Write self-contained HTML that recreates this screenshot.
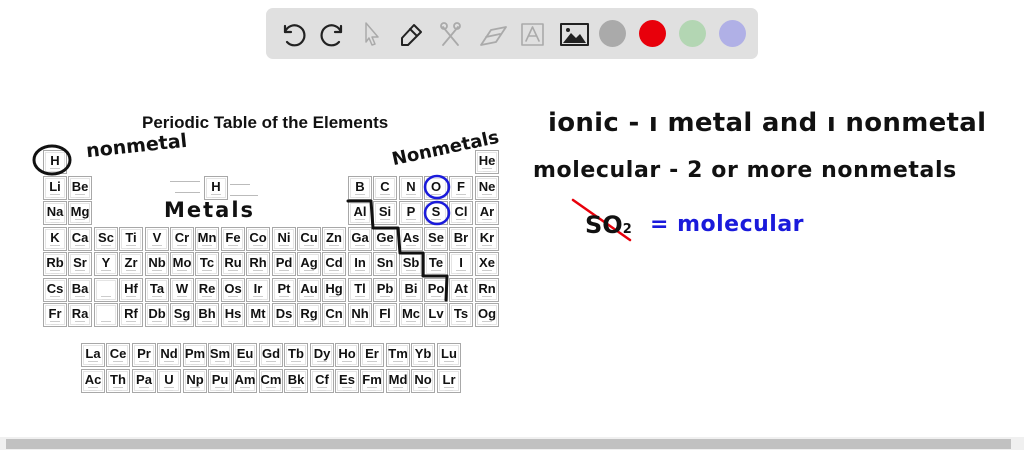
<!DOCTYPE html>
<html><head><meta charset="utf-8">
<style>
*{margin:0;padding:0;box-sizing:border-box}
body{width:1024px;height:450px;background:#fff;position:relative;overflow:hidden;font-family:"Liberation Sans",sans-serif}
#tb{position:absolute;left:266px;top:8px;width:492px;height:51px;background:#e0e0e0;border-radius:7px}
.c{position:absolute;top:12px;width:27px;height:27px;border-radius:50%}
.cell{position:absolute;width:24px;height:24px;border:1px solid #a8a8a8;background:#fff}
.cell i{position:absolute;left:1px;top:1px;right:1px;bottom:1px;border:1px solid #e4e4e4}
.cell b{position:absolute;left:0;right:0;top:2px;text-align:center;font-size:13px;font-weight:bold;color:#111}
.cell s{position:absolute;left:6px;right:6px;top:17px;height:1px;background:#ccc}
.cell u{position:absolute;left:7px;right:7px;top:20px;height:1px;background:#ddd}
.hw{position:absolute;font-family:"DejaVu Sans",sans-serif;color:#111;white-space:nowrap}
</style></head><body>
<div id="tb">
<svg width="492" height="51" style="position:absolute;left:0;top:0" fill="none" stroke-linecap="round" stroke-linejoin="round">
<g stroke="#222" stroke-width="2.2">
<path d="M19 18 L19 24 L25 24"/><path d="M19 24 A10 10 0 1 1 21 34"/>
<path d="M75 18 L75 24 L69 24"/><path d="M75 24 A10 10 0 1 0 73 34"/>
</g>
<path d="M100 15 L112 29 L106 29 L109 36 L106 37 L103 30 L100 34 Z" stroke="#aaa" stroke-width="1.5"/>
<path d="M136 37 L136 30 L148 17 L155 24 L142 37 Z M144 21 L151 28" stroke="#222" stroke-width="2"/>
<g stroke="#aaa" stroke-width="1.8"><path d="M177 37 L192 19 M192 37 L177 19"/><circle cx="178" cy="18" r="3"/><circle cx="191" cy="18" r="3"/></g>
<path d="M215 37 L225 22 L240 19 L230 34 Z M220 29 L234 26" stroke="#aaa" stroke-width="1.8"/>
<rect x="256" y="16" width="21" height="21" stroke="#aaa" stroke-width="1.6"/><path d="M260 33 L266.5 19 L273 33 M262.5 28 L270.5 28" stroke="#aaa" stroke-width="1.6"/>
<rect x="295" y="16" width="27" height="21" stroke="#222" stroke-width="2"/><path d="M297 35 L305 25 L310 30 L314 26 L320 35 Z" fill="#222"/><circle cx="302" cy="22" r="2" fill="#222"/>
</svg>
<div class="c" style="left:333px;background:#aaa"></div>
<div class="c" style="left:373px;background:#e8000b"></div>
<div class="c" style="left:413px;background:#b3d6b3"></div>
<div class="c" style="left:453px;background:#b0b0e6"></div>
</div>

<div style="position:absolute;left:142px;top:113px;font-size:17px;font-weight:bold;color:#111">Periodic Table of the Elements</div>
<div id="pt"></div>

<div class="cell" style="left:204px;top:176px"><i></i><b>H</b><s></s><u></u></div>
<div style="position:absolute;left:170px;top:181px;width:30px;height:1px;background:#bbb"></div>
<div style="position:absolute;left:175px;top:192px;width:25px;height:1px;background:#bbb"></div>
<div style="position:absolute;left:230px;top:184px;width:20px;height:1px;background:#bbb"></div>
<div style="position:absolute;left:230px;top:195px;width:28px;height:1px;background:#bbb"></div>

<svg width="1024" height="450" style="position:absolute;left:0;top:0" fill="none" stroke-linecap="round" stroke-linejoin="round">
<ellipse cx="52" cy="160" rx="18" ry="14" stroke="#111" stroke-width="3"/>
<path d="M348 201 L371 201 L373 228 L398 228 L400 253 L423 253 L423 276 L447 276 L446 300" stroke="#111" stroke-width="3"/>
<ellipse cx="437" cy="187" rx="12" ry="11" stroke="#1a1adb" stroke-width="2.5"/>
<ellipse cx="437" cy="213" rx="12" ry="11" stroke="#1a1adb" stroke-width="2.5"/>
<path d="M573 200 L630 240" stroke="#e8000b" stroke-width="2.5"/>
</svg>

<div class="hw" style="left:86px;top:135px;font-size:19px;font-weight:bold;transform:rotate(-6deg)">nonmetal</div>
<div class="hw" style="left:164px;top:198px;font-size:21px;font-weight:bold;letter-spacing:2px">Metals</div>
<div class="hw" style="left:391px;top:138px;font-size:18px;font-weight:bold;transform:rotate(-12deg)">Nonmetals</div>
<div class="hw" style="left:548px;top:108px;font-size:26px;font-weight:bold;letter-spacing:0.3px">ionic - ı metal and ı nonmetal</div>
<div class="hw" style="left:533px;top:158px;font-size:22px;font-weight:bold;letter-spacing:0.6px">molecular - 2 or more nonmetals</div>
<div class="hw" style="left:585px;top:211px;font-size:24px;font-weight:bold">SO<span style="font-size:13px">2</span></div>
<div class="hw" style="left:650px;top:212px;font-size:22px;font-weight:bold;color:#1a1adb;letter-spacing:0.5px">= molecular</div>

<div style="position:absolute;left:0;top:437px;width:1024px;height:13px;background:#f0f0f0"></div>
<div style="position:absolute;left:6px;top:439px;width:1005px;height:10px;background:#c1c1c1"></div>

<script>
var rows=[0,0,0,
"K Ca Sc Ti V Cr Mn Fe Co Ni Cu Zn Ga Ge As Se Br Kr",
"Rb Sr Y Zr Nb Mo Tc Ru Rh Pd Ag Cd In Sn Sb Te I Xe",
"Cs Ba _ Hf Ta W Re Os Ir Pt Au Hg Tl Pb Bi Po At Rn",
"Fr Ra _ Rf Db Sg Bh Hs Mt Ds Rg Cn Nh Fl Mc Lv Ts Og"];
var grid=[
[["H",0],["He",17]],
[["Li",0],["Be",1],["B",12],["C",13],["N",14],["O",15],["F",16],["Ne",17]],
[["Na",0],["Mg",1],["Al",12],["Si",13],["P",14],["S",15],["Cl",16],["Ar",17]]];
for(var r=3;r<7;r++){var a=rows[r].split(" ");grid.push(a.map(function(s,i){return [s,i]}));}
var h="";
function cell(x,y,s){h+='<div class="cell" style="left:'+x+'px;top:'+y+'px"><i></i><b>'+(s=="_"?"":s)+'</b><s></s><u></u></div>';}
grid.forEach(function(row,r){row.forEach(function(e){cell(Math.round(43+e[1]*25.4),Math.round(150+r*25.5),e[0]);});});
"La Ce Pr Nd Pm Sm Eu Gd Tb Dy Ho Er Tm Yb Lu".split(" ").forEach(function(s,i){cell(Math.round(81+i*25.4),343,s);});
"Ac Th Pa U Np Pu Am Cm Bk Cf Es Fm Md No Lr".split(" ").forEach(function(s,i){cell(Math.round(81+i*25.4),369,s);});
document.getElementById("pt").innerHTML=h;
</script>
</body></html>
